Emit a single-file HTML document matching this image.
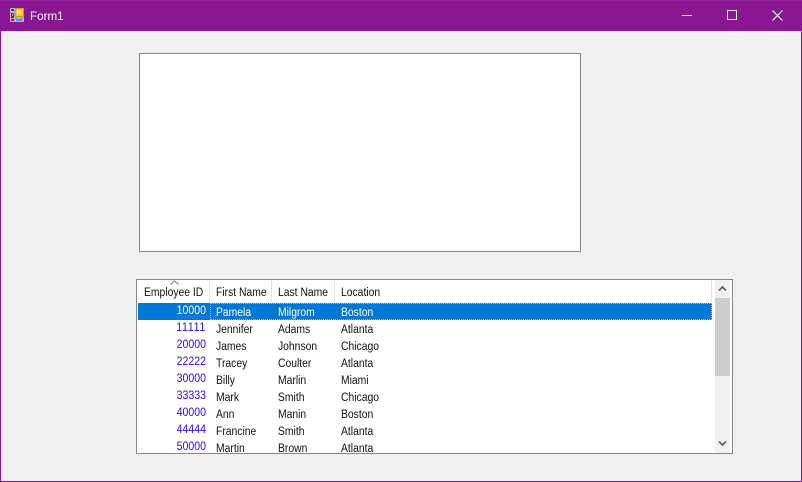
<!DOCTYPE html>
<html>
<head>
<meta charset="utf-8">
<style>
html,body{margin:0;padding:0;width:802px;height:482px;overflow:hidden;background:#f0f0f0}
*{box-sizing:border-box}
body{position:relative;font-family:"Liberation Sans",sans-serif;font-size:11.5px;color:#111}
.a{position:absolute}
.t{position:absolute;white-space:nowrap;line-height:14px;height:14px;transform:scaleX(.9);transform-origin:0 0}
.id{position:absolute;white-space:nowrap;line-height:14px;height:14px;width:60px;left:146px;text-align:right;color:#2a0cf5;font-size:12px;transform:scaleX(.88);transform-origin:100% 0}
.w{color:#fff}
</style>
</head>
<body>
<!-- window -->
<div class="a" style="left:0;top:0;width:802px;height:482px;background:#f0f0f0;border:1px solid #8a1693;border-top:0"></div>
<div class="a" style="left:0;top:0;width:802px;height:31px;background:#8a1693;border-top:1px solid #93259c"></div>
<svg class="a" style="left:10px;top:8px" width="14" height="14" viewBox="0 0 14 14">
<rect x="0" y="0" width="14" height="14" fill="#b9b3c0"/>
<rect x="1" y="1" width="3" height="2" fill="#8a1693"/>
<rect x="1" y="5" width="3" height="5" fill="#b01818"/>
<rect x="2" y="6" width="1" height="2" fill="#f08080"/>
<rect x="1" y="11" width="3" height="2" fill="#8a1693"/>
<rect x="5" y="0" width="9" height="9" fill="#c89a18"/>
<rect x="6" y="1" width="7" height="7" fill="#f4c83a"/>
<rect x="7" y="2" width="4" height="4" fill="#fbe08a"/>
<rect x="5" y="9" width="9" height="5" fill="#b9b3c0"/>
<rect x="6" y="10" width="6" height="3" fill="#5c90dc"/>
<rect x="7" y="10" width="3" height="1" fill="#a8c8f0"/>
</svg>
<div class="t" style="left:30px;top:9px;color:#fff;font-size:12px;transform:scaleX(.97)">Form1</div>
<!-- caption buttons -->
<div class="a" style="left:682px;top:15px;width:10px;height:1px;background:#fff"></div>
<div class="a" style="left:727px;top:10px;width:10px;height:10px;border:1px solid #fff"></div>
<svg class="a" style="left:772px;top:10px" width="11" height="11" viewBox="0 0 11 11"><path d="M.5 .5L10.5 10.5M10.5 .5L.5 10.5" stroke="#fff" stroke-width="1.1" fill="none"/></svg>
<!-- picture box -->
<div class="a" style="left:139px;top:53px;width:442px;height:199px;background:#fff;border:1px solid #868686"></div>
<!-- list view -->
<div class="a" style="left:136px;top:279px;width:597px;height:175px;background:#fff;border:1px solid #868686;overflow:hidden"></div>
<!-- header dividers -->
<div class="a" style="left:209px;top:280px;width:1px;height:22px;background:#e5e5e5"></div>
<div class="a" style="left:271px;top:280px;width:1px;height:22px;background:#e5e5e5"></div>
<div class="a" style="left:334px;top:280px;width:1px;height:22px;background:#e5e5e5"></div>
<div class="a" style="left:711px;top:280px;width:1px;height:22px;background:#e5e5e5"></div>
<svg class="a" style="left:170px;top:280px" width="9" height="5" viewBox="0 0 9 5"><path d="M.5 4.5L4.5 .8L8.5 4.5" stroke="#7a7a7a" fill="none"/></svg>
<div class="t" style="left:144px;top:286px">Employee ID</div>
<div class="t" style="left:216px;top:286px">First Name</div>
<div class="t" style="left:278px;top:286px">Last Name</div>
<div class="t" style="left:341px;top:286px">Location</div>
<!-- selected row -->
<div class="a" style="left:138px;top:303px;width:574px;height:17px;background:#0078d7"></div>
<div class="a" style="left:210px;top:303px;width:502px;height:17px;border:1px dotted #8fc4ee"></div>
<!-- rows -->
<div class="id w" style="top:303px">10000</div>
<div class="t w" style="left:216px;top:306px">Pamela</div><div class="t w" style="left:278px;top:306px">Milgrom</div><div class="t w" style="left:341px;top:306px">Boston</div>
<div class="id" style="top:320px;color:#1a12d0;letter-spacing:.8px">11111</div>
<div class="t" style="left:216px;top:323px">Jennifer</div><div class="t" style="left:278px;top:323px">Adams</div><div class="t" style="left:341px;top:323px">Atlanta</div>
<div class="id" style="top:337px">20000</div>
<div class="t" style="left:216px;top:340px">James</div><div class="t" style="left:278px;top:340px">Johnson</div><div class="t" style="left:341px;top:340px">Chicago</div>
<div class="id" style="top:354px">22222</div>
<div class="t" style="left:216px;top:357px">Tracey</div><div class="t" style="left:278px;top:357px">Coulter</div><div class="t" style="left:341px;top:357px">Atlanta</div>
<div class="id" style="top:371px">30000</div>
<div class="t" style="left:216px;top:374px">Billy</div><div class="t" style="left:278px;top:374px">Marlin</div><div class="t" style="left:341px;top:374px">Miami</div>
<div class="id" style="top:388px">33333</div>
<div class="t" style="left:216px;top:391px">Mark</div><div class="t" style="left:278px;top:391px">Smith</div><div class="t" style="left:341px;top:391px">Chicago</div>
<div class="id" style="top:405px">40000</div>
<div class="t" style="left:216px;top:408px">Ann</div><div class="t" style="left:278px;top:408px">Manin</div><div class="t" style="left:341px;top:408px">Boston</div>
<div class="id" style="top:422px">44444</div>
<div class="t" style="left:216px;top:425px">Francine</div><div class="t" style="left:278px;top:425px">Smith</div><div class="t" style="left:341px;top:425px">Atlanta</div>
<div class="id" style="top:439px">50000</div>
<div class="t" style="left:216px;top:442px;height:11px;overflow:hidden">Martin</div><div class="t" style="left:278px;top:442px;height:11px;overflow:hidden">Brown</div><div class="t" style="left:341px;top:442px;height:11px;overflow:hidden">Atlanta</div>
<!-- scrollbar -->
<div class="a" style="left:715px;top:280px;width:15px;height:173px;background:#f0f0f0"></div>
<div class="a" style="left:715px;top:298px;width:15px;height:78px;background:#cdcdcd"></div>
<svg class="a" style="left:718px;top:285px" width="9" height="7" viewBox="0 0 9 7"><path d="M1 5.5L4.5 2L8 5.5" stroke="#606060" stroke-width="1.7" fill="none"/></svg>
<svg class="a" style="left:718px;top:440px" width="9" height="7" viewBox="0 0 9 7"><path d="M1 1.5L4.5 5L8 1.5" stroke="#606060" stroke-width="1.7" fill="none"/></svg>
</body>
</html>
